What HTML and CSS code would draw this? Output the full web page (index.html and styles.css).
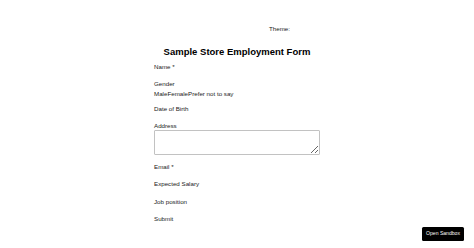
FILE: index.html
```html
<!DOCTYPE html>
<html>
<head>
<meta charset="utf-8">
<link rel="stylesheet" href="styles.css">
</head>
<body>
<div class="page">
  <div class="theme-bar"><span class="theme">Theme:</span></div>
  <h1 class="title">Sample Store Employment Form</h1>
  <form class="form">
    <div class="field"><label>Name *</label></div>
    <div class="field"><label>Gender</label><div class="options">MaleFemalePrefer not to say</div></div>
    <div class="field"><label>Date of Birth</label></div>
    <div class="field"><label>Address</label><textarea class="area"></textarea></div>
    <div class="field"><label>Email *</label></div>
    <div class="field"><label>Expected Salary</label></div>
    <div class="field"><label>Job position</label></div>
    <div class="field"><span>Submit</span></div>
  </form>
</div>
<button class="sandbox">Open Sandbox</button>
</body>
</html>
```
FILE: styles.css
```css
html, body { margin: 0; padding: 0; background: #fff; }
body { font-family: "Liberation Sans", Arial, sans-serif; color: #1a1a1a; width: 474px; height: 248px; overflow: hidden; position: relative; }
.page { display: flex; flex-direction: column; align-items: center; padding-top: 24px; }
.theme-bar { width: 166px; display: flex; justify-content: flex-end; }
.theme { font-size: 6.2px; line-height: 9px; margin-right: 30px; }
.title { font-size: 9.5px; font-weight: bold; margin: 12.8px 0 4px; line-height: 12px; color: #000; }
.form { width: 166px; display: flex; flex-direction: column; gap: 8.3px; font-size: 6.2px; line-height: 9px; }
.field { display: flex; flex-direction: column; }
.options { margin: 1px 0 -2.3px; }
.area { display: block; box-sizing: border-box; width: 166px; height: 25px; margin: 0 0 -1.7px; border: 1px solid #c2c2c2; border-radius: 1px; padding: 0; resize: vertical; background: #fff; }
.sandbox { position: absolute; right: 9.7px; bottom: 7.3px; box-sizing: border-box; background: #000; color: #fff; border: 0; border-radius: 1.5px; font-family: "Liberation Sans", Arial, sans-serif; font-size: 5.1px; line-height: 13.4px; padding: 0; height: 13.4px; width: 42.6px; text-align: center; }
```
